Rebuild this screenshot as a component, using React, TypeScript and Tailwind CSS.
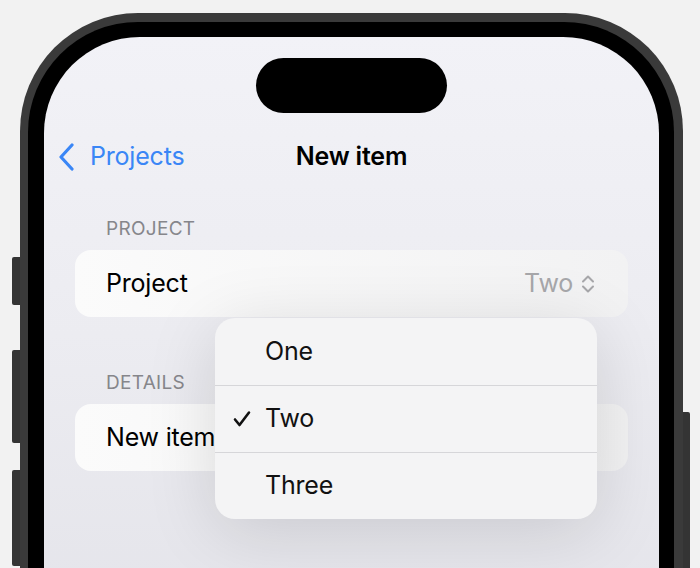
import React from 'react';

const font = { fontFamily: 'Inter, "Noto Sans", sans-serif' };

function BackChevron() {
  return (
    <svg width="18" height="28" viewBox="0 0 18 28" fill="none">
      <path d="M15 2 L4 14 L15 26" stroke="#3a86f6" strokeWidth="3.2" strokeLinecap="round" strokeLinejoin="round" />
    </svg>
  );
}

function UpDown() {
  return (
    <svg width="16" height="22" viewBox="0 0 16 22" fill="none">
      <path d="M3 8.5 L8 3.5 L13 8.5" stroke="#a7a7aa" strokeWidth="2" strokeLinecap="round" strokeLinejoin="round" />
      <path d="M3 13.5 L8 18.5 L13 13.5" stroke="#a7a7aa" strokeWidth="2" strokeLinecap="round" strokeLinejoin="round" />
    </svg>
  );
}

function Check() {
  return (
    <svg width="18" height="18" viewBox="0 0 18 18" fill="none">
      <path d="M2 9.5 L6.5 15 L16 2.5" stroke="#111" strokeWidth="2.6" strokeLinecap="round" strokeLinejoin="round" />
    </svg>
  );
}

const options = ['One', 'Two', 'Three'];

export default function App() {
  return (
    <div className="w-[700px] h-[568px] overflow-hidden bg-[#f2f2f2] pt-[13px] pl-[20px]" style={font}>
      <div className="relative w-[663px] h-[620px]">
        {/* side buttons */}
        <div className="absolute left-[-8px] top-[244px] w-[8px] h-[48px] rounded-l-[2px] bg-[#343434]" />
        <div className="absolute left-[-8px] top-[337px] w-[8px] h-[93px] rounded-l-[2px] bg-[#343434]" />
        <div className="absolute left-[-8px] top-[457px] w-[8px] h-[96px] rounded-l-[2px] bg-[#343434]" />
        <div className="absolute left-[663px] top-[399px] w-[7px] h-[200px] rounded-r-[2px] bg-[#343434]" />

        <div className="h-full rounded-t-[118px] bg-[#3a3a3a] pl-[8px] pr-[9px] pt-[9px]">
          <div className="h-full rounded-t-[110px] bg-black pl-[16px] pr-[15px] pt-[15px]">
            <div className="relative h-full rounded-t-[96px] bg-gradient-to-b from-[#f2f2f7] via-[#ececf1] to-[#e4e4ea] flex flex-col overflow-hidden">
              <div className="mt-[21px] mx-auto w-[191px] h-[55px] rounded-full bg-black" />

              <div className="mt-[19px] h-[50px] grid grid-cols-[1fr_auto_1fr] items-center">
                <div className="flex items-center pl-[13px] gap-[15px]">
                  <BackChevron />
                  <span className="text-[25px] text-[#3a86f6] tracking-[-0.2px]">Projects</span>
                </div>
                <div className="text-[25px] font-semibold text-black tracking-[-0.2px]">New item</div>
                <div />
              </div>

              <div className="px-[31px]">
                <div className="mt-[35px] h-[24px] flex items-center pl-[31px] text-[19px] text-[#86868b] tracking-[0.3px]">PROJECT</div>
                <div className="mt-[9px] h-[67px] rounded-[16px] bg-gradient-to-r from-[#fbfbfb] to-[#f2f2f3] flex items-center justify-between pl-[31px] pr-[32px]">
                  <span className="text-[25px] text-black tracking-[-0.2px]">Project</span>
                  <span className="flex items-center gap-[7px]">
                    <span className="text-[25px] text-[#a7a7aa] tracking-[-0.2px]">Two</span>
                    <UpDown />
                  </span>
                </div>

                <div className="mt-[54px] h-[24px] flex items-center pl-[31px] text-[19px] text-[#86868b] tracking-[0.3px]">DETAILS</div>
                <div className="mt-[9px] h-[67px] rounded-[16px] bg-gradient-to-r from-[#fbfbfb] to-[#f2f2f3] flex items-center pl-[31px]">
                  <span className="text-[25px] text-black tracking-[-0.2px]">New item</span>
                </div>
              </div>

              {/* open picker menu */}
              <div className="absolute left-[171px] top-[281px] w-[382px] rounded-[20px] bg-[#f4f4f5] shadow-[0_12px_70px_rgba(0,0,0,0.13)] overflow-hidden">
                {options.map((o, i) => (
                  <div key={o} className={`h-[67px] flex items-center ${i > 0 ? 'border-t border-[#d6d6d9]' : ''}`}>
                    <span className="w-[50px] flex justify-end pr-[14px]">{o === 'Two' && <Check />}</span>
                    <span className="text-[25px] text-[#111] tracking-[-0.2px]">{o}</span>
                  </div>
                ))}
              </div>
            </div>
          </div>
        </div>
      </div>
    </div>
  );
}
